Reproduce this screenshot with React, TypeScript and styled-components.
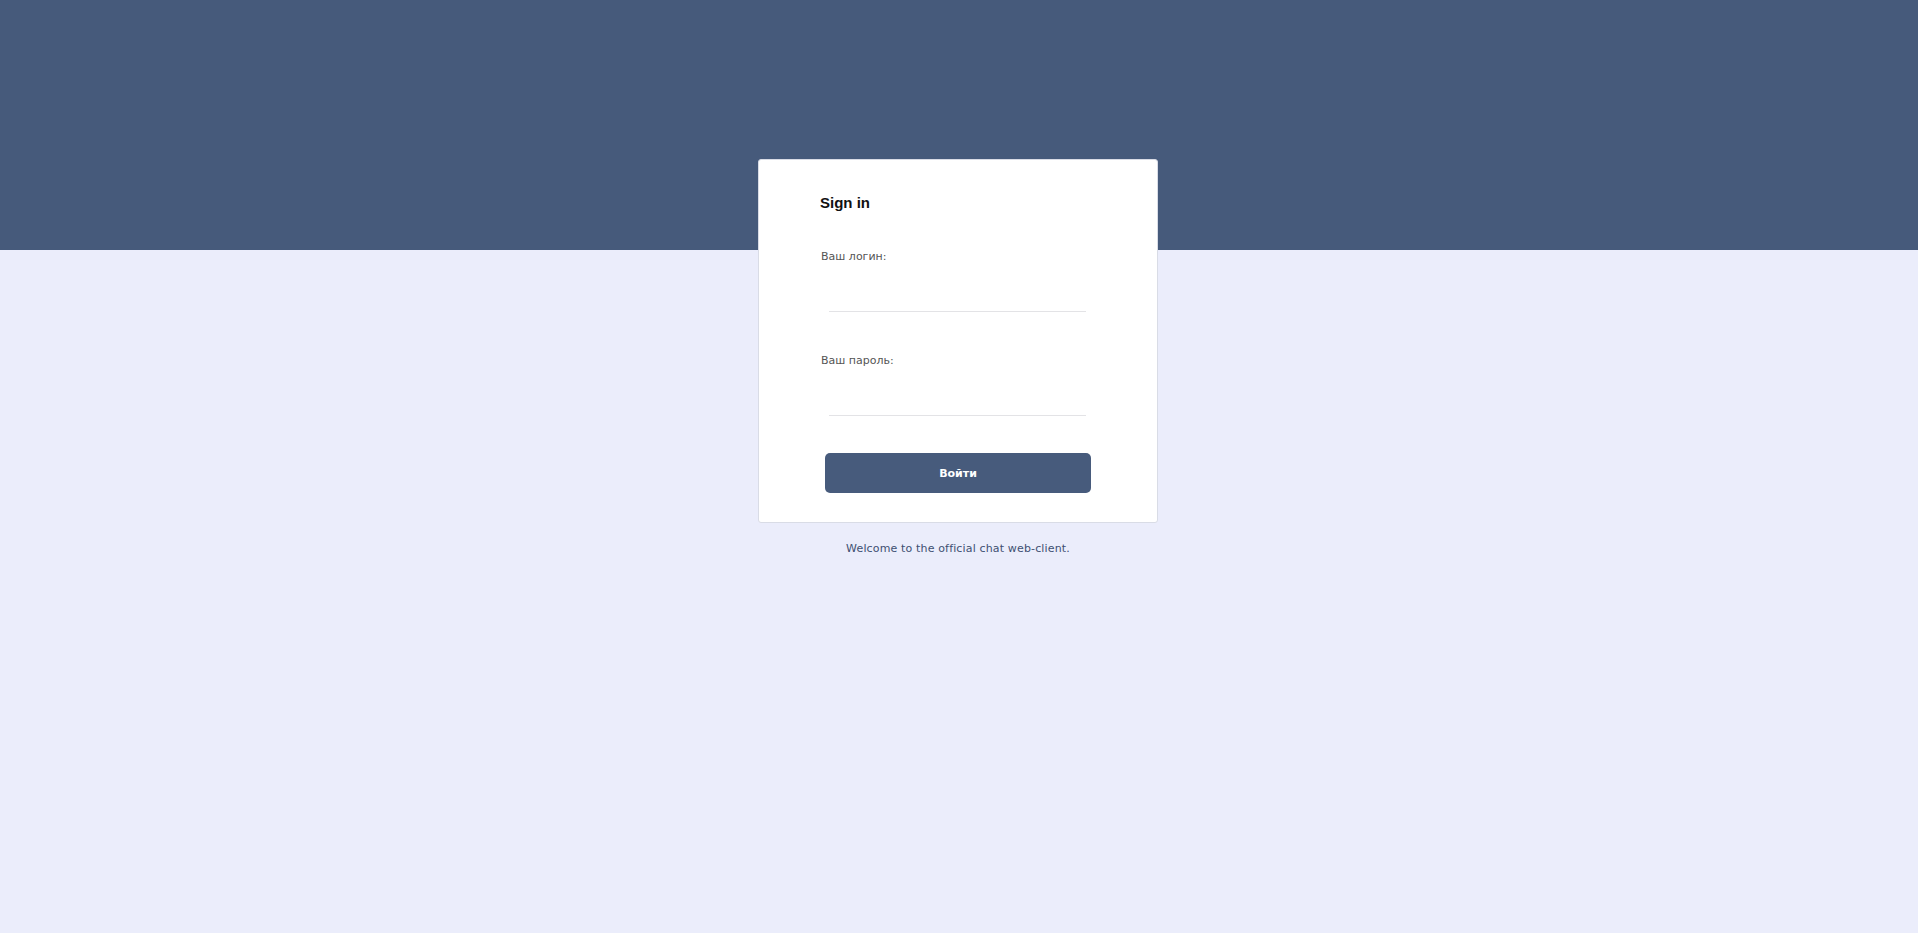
import React from "react";
import styled, { createGlobalStyle } from "styled-components";

const GlobalStyle = createGlobalStyle`
  html, body {
    margin: 0;
    padding: 0;
  }
  body {
    font-family: "DejaVu Sans", Tahoma, sans-serif;
    background: #ebedfb;
  }
`;

const Page = styled.div`
  min-height: 933px;
  background: linear-gradient(to bottom, #465a7b 0, #465a7b 250px, #ebedfb 250px);
  display: flex;
  flex-direction: column;
  align-items: center;
  padding: 159px 2px 0 0;
  box-sizing: border-box;
`;

const Card = styled.form`
  width: 400px;
  box-sizing: border-box;
  background: #ffffff;
  border: 1px solid #d9dce6;
  border-radius: 3px;
  padding: 34px 66px 29px;
  display: flex;
  flex-direction: column;
`;

const Title = styled.h1`
  margin: 0 0 39px -5px;
  font-family: "Liberation Sans", Arial, sans-serif;
  font-size: 15px;
  font-weight: bold;
  line-height: 17px;
  color: #111111;
`;

const Field = styled.div<{ $last?: boolean }>`
  display: flex;
  flex-direction: column;
  margin-bottom: ${(p) => (p.$last ? "37px" : "42px")};
`;

const Label = styled.label`
  margin-left: -4px;
  font-size: 11px;
  line-height: 13px;
  color: #555555;
`;

const Input = styled.input`
  margin: 8px 5px 0 4px;
  height: 41px;
  box-sizing: border-box;
  border: 0;
  border-bottom: 1px solid #e3e3e6;
  outline: none;
  background: transparent;
  font-family: inherit;
  font-size: 12px;
  color: #333333;
  padding: 0 2px;
`;

const Button = styled.button`
  height: 40px;
  border: 0;
  border-radius: 5px;
  background: #475b7c;
  color: #ffffff;
  font-family: "DejaVu Sans", Tahoma, sans-serif;
  font-size: 11px;
  font-weight: bold;
  cursor: pointer;
`;

const Welcome = styled.p`
  margin: 19px 0 0;
  font-size: 11px;
  line-height: 13px;
  letter-spacing: 0.15px;
  color: #3e5072;
`;

export default function App() {
  return (
    <>
      <GlobalStyle />
      <Page>
        <Card onSubmit={(e) => e.preventDefault()}>
          <Title>Sign in</Title>
          <Field>
            <Label htmlFor="login">Ваш логин:</Label>
            <Input id="login" type="text" />
          </Field>
          <Field $last>
            <Label htmlFor="password">Ваш пароль:</Label>
            <Input id="password" type="password" />
          </Field>
          <Button type="submit">Войти</Button>
        </Card>
        <Welcome>Welcome to the official chat web-client.</Welcome>
      </Page>
    </>
  );
}
